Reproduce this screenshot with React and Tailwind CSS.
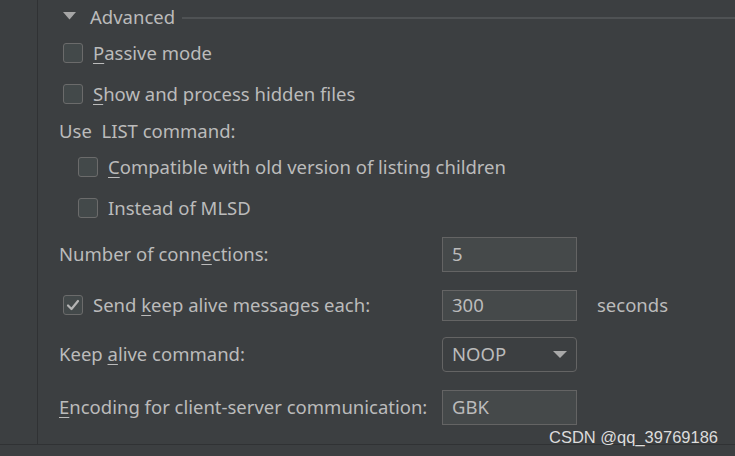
import React from "react";

const font = { fontFamily: '"Noto Sans", "Open Sans", sans-serif' };

function Mn({ children }) {
  return <span className="underline underline-offset-[3px] decoration-1">{children}</span>;
}

function Checkbox({ checked }) {
  return (
    <span className="flex h-[20px] w-[20px] shrink-0 items-center justify-center rounded-[3px] border border-[#6b6b6b] bg-[#43494a]">
      {checked && (
        <svg width="14" height="12" viewBox="0 0 14 12">
          <path d="M2 6.5 L5.5 10 L12 2" fill="none" stroke="#b4b4b4" strokeWidth="2.2" strokeLinecap="round" strokeLinejoin="round" />
        </svg>
      )}
    </span>
  );
}

function TextBox({ value, h = "h-[35px]" }) {
  return (
    <div className={`${h} w-[135px] flex items-center border border-[#646464] bg-[#45494a] pl-[9px] text-[#bbbbbb]`}>
      {value}
    </div>
  );
}

export default function App() {
  return (
    <div
      className="relative flex h-[456px] w-[735px] flex-col overflow-hidden bg-[#3c3f41] text-[18.5px] text-[#bbbbbb]"
      style={font}
    >
      <div className="flex h-[445px] border-b border-[#303234]">
        {/* gutter */}
        <div className="w-[38px] shrink-0 border-r border-[#303234]" />

        <div className="flex flex-1 flex-col">
          {/* header */}
          <div className="flex h-[34px] items-center pl-[25px]">
            <svg width="13" height="8" viewBox="0 0 13 8" className="mt-[-2px]">
              <path d="M0 0 H13 L6.5 7.5 Z" fill="#a6a6a6" />
            </svg>
            <span className="ml-[14px]">Advanced</span>
            <div className="ml-[7px] h-[2px] flex-1 bg-[#4f5254] mt-[2px]" />
          </div>

          <div className="flex h-[38px] items-center gap-[10px] pl-[25px]">
            <Checkbox />
            <span><Mn>P</Mn>assive mode</span>
          </div>

          <div className="flex h-[44px] items-center gap-[10px] pl-[25px]">
            <Checkbox />
            <span><Mn>S</Mn>how and process hidden files</span>
          </div>

          <div className="flex h-[30px] items-center pl-[21px]">
            <span className="whitespace-pre">Use  LIST command:</span>
          </div>

          <div className="flex h-[42px] items-center gap-[10px] pl-[40px]">
            <Checkbox />
            <span><Mn>C</Mn>ompatible with old version of listing children</span>
          </div>

          <div className="flex h-[40px] items-center gap-[10px] pl-[40px]">
            <Checkbox />
            <span>Instead of MLSD</span>
          </div>

          <div className="flex h-[52px] items-center pl-[21px]">
            <span className="w-[383px]">Number of conn<Mn>e</Mn>ctions:</span>
            <TextBox value="5" />
          </div>

          <div className="flex h-[50px] items-center pl-[25px]">
            <div className="flex w-[379px] items-center gap-[10px]">
              <Checkbox checked />
              <span>Send <Mn>k</Mn>eep alive messages each:</span>
            </div>
            <TextBox value="300" h="h-[31px]" />
            <span className="ml-[20px]">seconds</span>
          </div>

          <div className="flex h-[48px] items-center pl-[21px]">
            <span className="w-[383px]">Keep <Mn>a</Mn>live command:</span>
            <div className="flex h-[35px] w-[135px] items-center justify-between rounded-[4px] border border-[#646464] pl-[9px] pr-[9px]">
              <span>NOOP</span>
              <svg width="14" height="7" viewBox="0 0 14 7">
                <path d="M0 0 H14 L7 7 Z" fill="#a9a9a9" />
              </svg>
            </div>
          </div>

          <div className="flex h-[58px] items-center pl-[21px]">
            <span className="w-[383px]"><Mn>E</Mn>ncoding for client-server communication:</span>
            <TextBox value="GBK" />
          </div>
        </div>
      </div>

      <span
        className="absolute left-[549px] top-[428px] text-[16.5px] leading-[18px] text-[#dcdcdc]"
        style={{ fontFamily: '"Liberation Sans", Arial, sans-serif' }}
      >
        CSDN @qq_39769186
      </span>
    </div>
  );
}
